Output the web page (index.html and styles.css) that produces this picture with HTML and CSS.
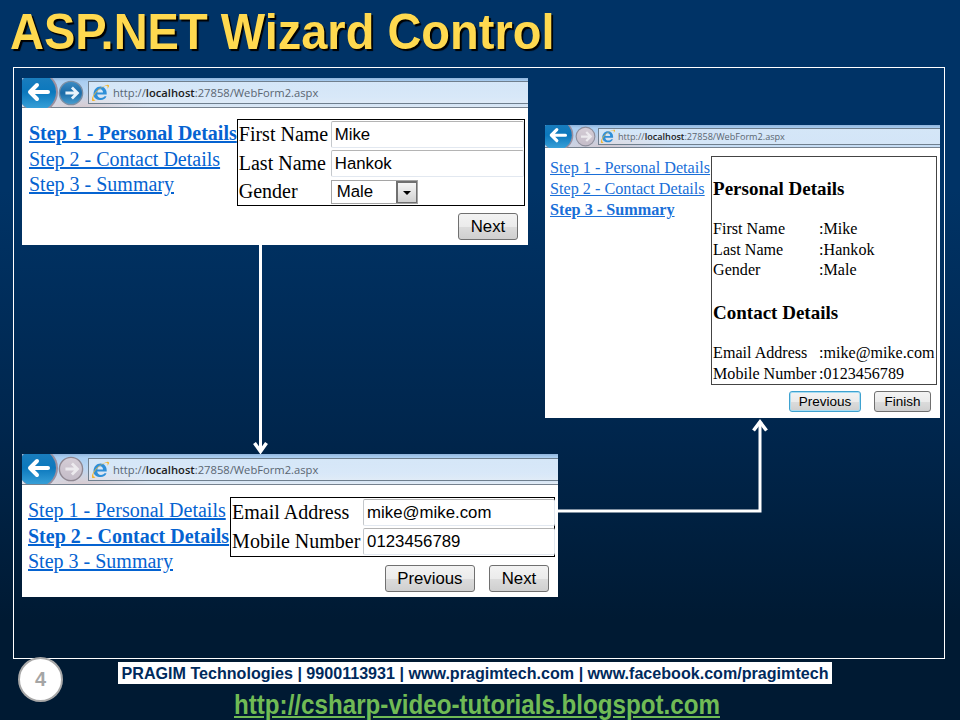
FILE: index.html
```html
<!DOCTYPE html>
<html lang="en">
<head>
<meta charset="utf-8">
<title>ASP.NET Wizard Control</title>
<link rel="stylesheet" href="styles.css">
</head>
<body>
<svg width="0" height="0" class="defs">
  <defs>
    <linearGradient id="backFill" x1="0" y1="0" x2="0" y2="1">
      <stop offset="0" stop-color="#1f7fbe"/><stop offset=".5" stop-color="#0b78bd"/><stop offset="1" stop-color="#3fa6dc"/>
    </linearGradient>
    <linearGradient id="fwdFill" x1="0" y1="0" x2="0" y2="1">
      <stop offset="0" stop-color="#3c8cc4"/><stop offset=".5" stop-color="#1c6ca8"/><stop offset="1" stop-color="#4a9fd0"/>
    </linearGradient>
    <linearGradient id="offFill" x1="0" y1="0" x2="0" y2="1">
      <stop offset="0" stop-color="#d5cdd6"/><stop offset="1" stop-color="#c4bcc8"/>
    </linearGradient>
    <symbol id="nav" viewBox="0 0 66 30">
      <circle cx="16" cy="14" r="20" fill="#9a8f9f"/>
      <circle cx="15" cy="14" r="19" fill="url(#backFill)"/>
      <path d="M26 14H8M15 7l-7 7 7 7" fill="none" stroke="#fff" stroke-width="4" stroke-linecap="round" stroke-linejoin="round"/>
    </symbol>
    <symbol id="ie" viewBox="2 1 17 17">
      <path d="M3.500 11.500C3.500 6.800 6.600 3.600 10.500 3.600c3.700 0 6.200 2.800 6.200 6.800v1.100H7.200c.3 2.300 1.700 3.500 3.800 3.500 1.500 0 2.700-.6 3.500-1.700h2c-1 2.500-3.100 3.800-5.700 3.800-4.300 0-7.300-2.500-7.300-5.600zM7.300 9.600h5.800c-.1-2-1.200-3.300-2.900-3.300-1.600 0-2.700 1.300-2.900 3.300z" fill="#2f8fd8"/>
      <path d="M2.200 17.800C.6 15.600 5 8.200 10.400 5 14.800 2.400 18.400.9 19 2.400c.4 1-.8 2.500-1.700 3.400.4-1.500.6-2.600-.2-2.900-1.400-.5-4.400.9-7.400 3.100C6 9 2.800 13.500 3.400 15.800c.3 1 1.200 1.300 2.200 1.100-1.300 1.100-2.600 1.600-3.400.9z" fill="#f2b632"/>
    </symbol>
  </defs>
</svg>

<main class="slide">
  <h1 class="title">ASP.NET Wizard Control</h1>
  <div class="frame"></div>

  <svg class="arrows" width="960" height="720" viewBox="0 0 960 720" aria-hidden="true">
    <path d="M260.500 245V451M558 511H760V423" fill="none" stroke="#fff" stroke-width="3"/>
    <path d="M254.500 443L260.500 451.500 266.500 443M753.500 430.500L760 422 766.500 430.500" fill="none" stroke="#fff" stroke-width="3.500"/>
  </svg>

  <section class="window win-one">
    <div class="toolbar">
      <svg class="nav-icon"><use href="#nav"/></svg>
      <svg class="fwd" viewBox="0 0 28 28"><circle cx="14" cy="14" r="12.500" fill="url(#fwdFill)" stroke="#7c8ea3" stroke-width="1.500"/><path d="M21 14H8M15 8l6 6-6 6" fill="none" stroke="#e8f3fb" stroke-width="3"/></svg>
      <div class="address"><svg class="ie"><use href="#ie"/></svg><span>http://<b>localhost</b>:27858/WebForm2.aspx</span></div>
    </div>
    <div class="body">
      <nav class="steps">
        <a class="current" href="#a">Step 1 - Personal Details</a>
        <a href="#b">Step 2 - Contact Details</a>
        <a href="#c">Step 3 - Summary</a>
      </nav>
      <div class="content">
        <div class="form">
          <label>First Name</label><div class="field">Mike</div>
          <label>Last Name</label><div class="field">Hankok</div>
          <label>Gender</label>
          <div class="select">Male<span class="drop"><i></i></span></div>
        </div>
        <div class="buttons"><button>Next</button></div>
      </div>
    </div>
  </section>

  <section class="window win-two">
    <div class="toolbar">
      <svg class="nav-icon"><use href="#nav"/></svg>
      <svg class="fwd" viewBox="0 0 28 28"><circle cx="14" cy="14" r="12.500" fill="url(#offFill)" stroke="#8f8791" stroke-width="1.500"/><path d="M21 14H8M15 8l6 6-6 6" fill="none" stroke="#eceaee" stroke-width="3"/></svg>
      <div class="address"><svg class="ie"><use href="#ie"/></svg><span>http://<b>localhost</b>:27858/WebForm2.aspx</span></div>
    </div>
    <div class="body">
      <nav class="steps">
        <a href="#a">Step 1 - Personal Details</a>
        <a class="current" href="#b">Step 2 - Contact Details</a>
        <a href="#c">Step 3 - Summary</a>
      </nav>
      <div class="content">
        <div class="form">
          <label>Email Address</label><div class="field">mike@mike.com</div>
          <label>Mobile Number</label><div class="field">0123456789</div>
        </div>
        <div class="buttons"><button>Previous</button><button>Next</button></div>
      </div>
    </div>
  </section>

  <section class="window win-three">
    <div class="toolbar">
      <svg class="nav-icon"><use href="#nav"/></svg>
      <svg class="fwd" viewBox="0 0 28 28"><circle cx="14" cy="14" r="12.500" fill="url(#offFill)" stroke="#8f8f9c" stroke-width="1.500"/><path d="M21 14H8M15 8l6 6-6 6" fill="none" stroke="#eceaee" stroke-width="3"/></svg>
      <div class="address"><svg class="ie"><use href="#ie"/></svg><span>http://<b>localhost</b>:27858/WebForm2.aspx</span></div>
    </div>
    <div class="body">
      <nav class="steps">
        <a href="#a">Step 1 - Personal Details</a>
        <a href="#b">Step 2 - Contact Details</a>
        <a class="current" href="#c">Step 3 - Summary</a>
      </nav>
      <div class="content">
        <div class="summary">
          <h2>Personal Details</h2>
          <dl>
            <dt>First Name</dt><dd>:Mike</dd>
            <dt>Last Name</dt><dd>:Hankok</dd>
            <dt>Gender</dt><dd>:Male</dd>
          </dl>
          <h2>Contact Details</h2>
          <dl>
            <dt>Email Address</dt><dd>:mike@mike.com</dd>
            <dt>Mobile Number</dt><dd>:0123456789</dd>
          </dl>
        </div>
        <div class="buttons"><button class="focused">Previous</button><button>Finish</button></div>
      </div>
    </div>
  </section>

  <div class="page-num">4</div>
  <p class="contact">PRAGIM Technologies | 9900113931 | www.pragimtech.com | www.facebook.com/pragimtech</p>
  <a class="blog" href="#blog">http://csharp-video-tutorials.blogspot.com</a>
</main>
</body>
</html>
```
FILE: styles.css
```css
* { box-sizing: border-box; }
html, body { margin: 0; padding: 0; }
.defs { position: absolute; }
.slide {
  position: relative;
  width: 960px;
  height: 720px;
  overflow: hidden;
  background: linear-gradient(180deg, #003366 0, #003366 190px, #00264d 430px, #001a33 620px, #001a33 100%);
}
.title {
  margin: 0;
  padding: 6px 0 0 10px;
  font: bold 50px/52px "Liberation Sans", sans-serif;
  color: #ffd94f;
  text-shadow: 2px 2px 1px #000;
  transform-origin: 10px 0;
  transform: scaleX(.94);
  white-space: nowrap;
}
.frame { position: absolute; left: 13px; top: 67px; width: 932px; height: 592px; border: 1px solid #fff; }
.arrows { position: absolute; left: 0; top: 0; }

.window { position: absolute; background: #fff; display: flex; flex-direction: column; overflow: hidden; font-family: "Liberation Serif", serif; color: #000; }
.win-one { left: 22px; top: 78px; width: 506px; height: 167px; }
.win-two { left: 22px; top: 454px; width: 536px; height: 143px; }
.win-three { left: 545px; top: 125px; width: 395px; height: 293px; }

.toolbar {
  height: 30px;
  flex: none;
  display: flex;
  align-items: center;
  border-bottom: 1px solid #76828f;
  background:
    radial-gradient(ellipse 70px 16px at 60px 100%, rgba(214,196,200,.8), rgba(214,196,200,0)),
    linear-gradient(180deg, #8fb4dc 0, #a9cdf0 3px, #c4dcf5 20px, #d8e6f4 28px, #e4edf6 30px);
}
.nav-icon { width: 66px; height: 30px; margin-right: -30px; flex: none; }
.fwd { width: 26px; height: 26px; flex: none; }
.address {
  flex: 1;
  height: 23px;
  margin: 0 -2px 0 4px;
  display: flex;
  align-items: center;
  gap: 4px;
  padding-left: 3px;
  background: linear-gradient(180deg, rgba(255,255,255,.5), rgba(255,255,255,.3));
  border: 1px solid #6f7f8e;
  font: 11.200px "Open Sans", sans-serif;
  color: #5a6570;
}
.address b { font-weight: 600; color: #1c1c1c; }
.ie { width: 17px; height: 17px; flex: none; }

.body { flex: 1; display: flex; min-height: 0; padding: 11px 0 0 7px; }
.steps { display: flex; flex-direction: column; flex: none; font-size: 20px; line-height: 25.500px; padding-top: 2px; }
.steps a { color: #0563d1; text-decoration: underline; white-space: nowrap; }
.steps .current { font-weight: bold; }
.content { display: flex; flex-direction: column; flex: 1; min-width: 0; }

.form {
  display: grid;
  grid-template-columns: 92px 193px;
  border: 1px solid #000;
  font-size: 20px;
  padding: 1px 0 1px 1px;
  row-gap: 2px;
  width: 288px;
  align-items: center;
}
.form label { white-space: nowrap; line-height: 25px; }
.field {
  height: 27px;
  border: 1px solid #e2e8f0;
  border-top-color: #b4b4b4;
  border-left-color: #c4c8cc;
  border-radius: 2px;
  padding-left: 3px;
  font: 16.800px/25px "Liberation Sans", sans-serif;
}
.select {
  position: relative;
  width: 87px;
  height: 24px;
  margin-top: 1px;
  border: 1px solid #a5a5a5;
  padding-left: 5px;
  font: 16.800px/22px "Liberation Sans", sans-serif;
}
.drop {
  position: absolute; right: 0; top: 0; width: 21px; height: 22px;
  border: 1px solid #707070;
  border-left-width: 2px;
  border-top-width: 2px;
  background: linear-gradient(180deg, #f6f6f6, #d0d0d0);
  display: flex; align-items: center; justify-content: center;
}
.drop i { width: 0; height: 0; border: 4px solid transparent; border-top: 4px solid #000; border-bottom: 0; }

.buttons { display: flex; justify-content: flex-end; gap: 14px; padding: 7px 10px 0 0; }
button {
  height: 27px;
  min-width: 60px;
  padding: 0 11.500px;
  border: 1px solid #707070;
  border-radius: 3px;
  background: linear-gradient(180deg, #f3f3f3 0, #ebebeb 50%, #dcdcdc 51%, #cfcfcf 100%);
  font: 16.800px "Liberation Sans", sans-serif;
  color: #000;
}

.win-two .toolbar { height: 31px; }
.win-two .body { padding: 12px 0 0 6px; }
.win-two .steps { padding-top: 1px; }
.win-two .content { margin-left: 1px; }
.win-two .form { grid-template-columns: 131px 192px; width: 325px; }
.win-two .buttons { padding: 8px 9px 0 0; }

.win-three .toolbar { height: 23px; }
.win-three .nav-icon { width: 52px; height: 24px; margin-right: -22px; }
.win-three .fwd { width: 21px; height: 21px; }
.win-three .address { height: 17px; font-size: 9.100px; margin-left: 2px; padding-left: 2px; gap: 3px; }
.win-three .ie { width: 14px; height: 14px; }
.win-three .body { padding: 8px 0 0 5px; }
.win-three .steps { font-size: 16.200px; line-height: 20.800px; padding-top: 2px; }
.win-three .content { margin-left: 1px; }
.win-three .steps a { color: #1a6fd8; }
.summary { width: 226px; height: 229px; border: 1px solid #444; padding: 0 0 0 1px; font-size: 16.100px; line-height: 20.700px; }
.summary h2 { margin: 0; font-size: 19px; line-height: 20px; padding: 22px 0 20px; }
.summary dl { margin: 0; display: grid; grid-template-columns: 106px 1fr; }
.summary dd { margin: 0; white-space: nowrap; }
.summary dt { white-space: nowrap; }
.win-three .buttons { gap: 13px; padding: 6px 9px 0 0; }
.win-three button { height: 21px; font-size: 13.500px; padding: 0 8px; min-width: 57px; }
.win-three button.focused { width: 72px; border-color: #3fa2d0; box-shadow: inset 0 0 0 1px #a8dcf2; }

.page-num {
  position: absolute; left: 18px; top: 657px; width: 45px; height: 45px;
  border-radius: 50%; background: #fff; border: 2px solid #a8a8a8;
  display: flex; align-items: center; justify-content: center;
  font: bold 20px "Liberation Sans", sans-serif; color: #a5a5a5;
}
.contact {
  position: absolute; left: 118px; top: 662px; width: 714px; height: 22px; margin: 0;
  background: #fff; color: #002a5c;
  font: bold 16.100px/22px "Liberation Sans", sans-serif;
  text-align: center; white-space: nowrap;
}
.blog {
  position: absolute; left: 234px; top: 690px;
  font: bold 28px/30px "Liberation Sans", sans-serif;
  color: #70bb55; text-decoration: underline; white-space: nowrap;
  transform-origin: 0 0;
  transform: scaleX(.863);
}
```
